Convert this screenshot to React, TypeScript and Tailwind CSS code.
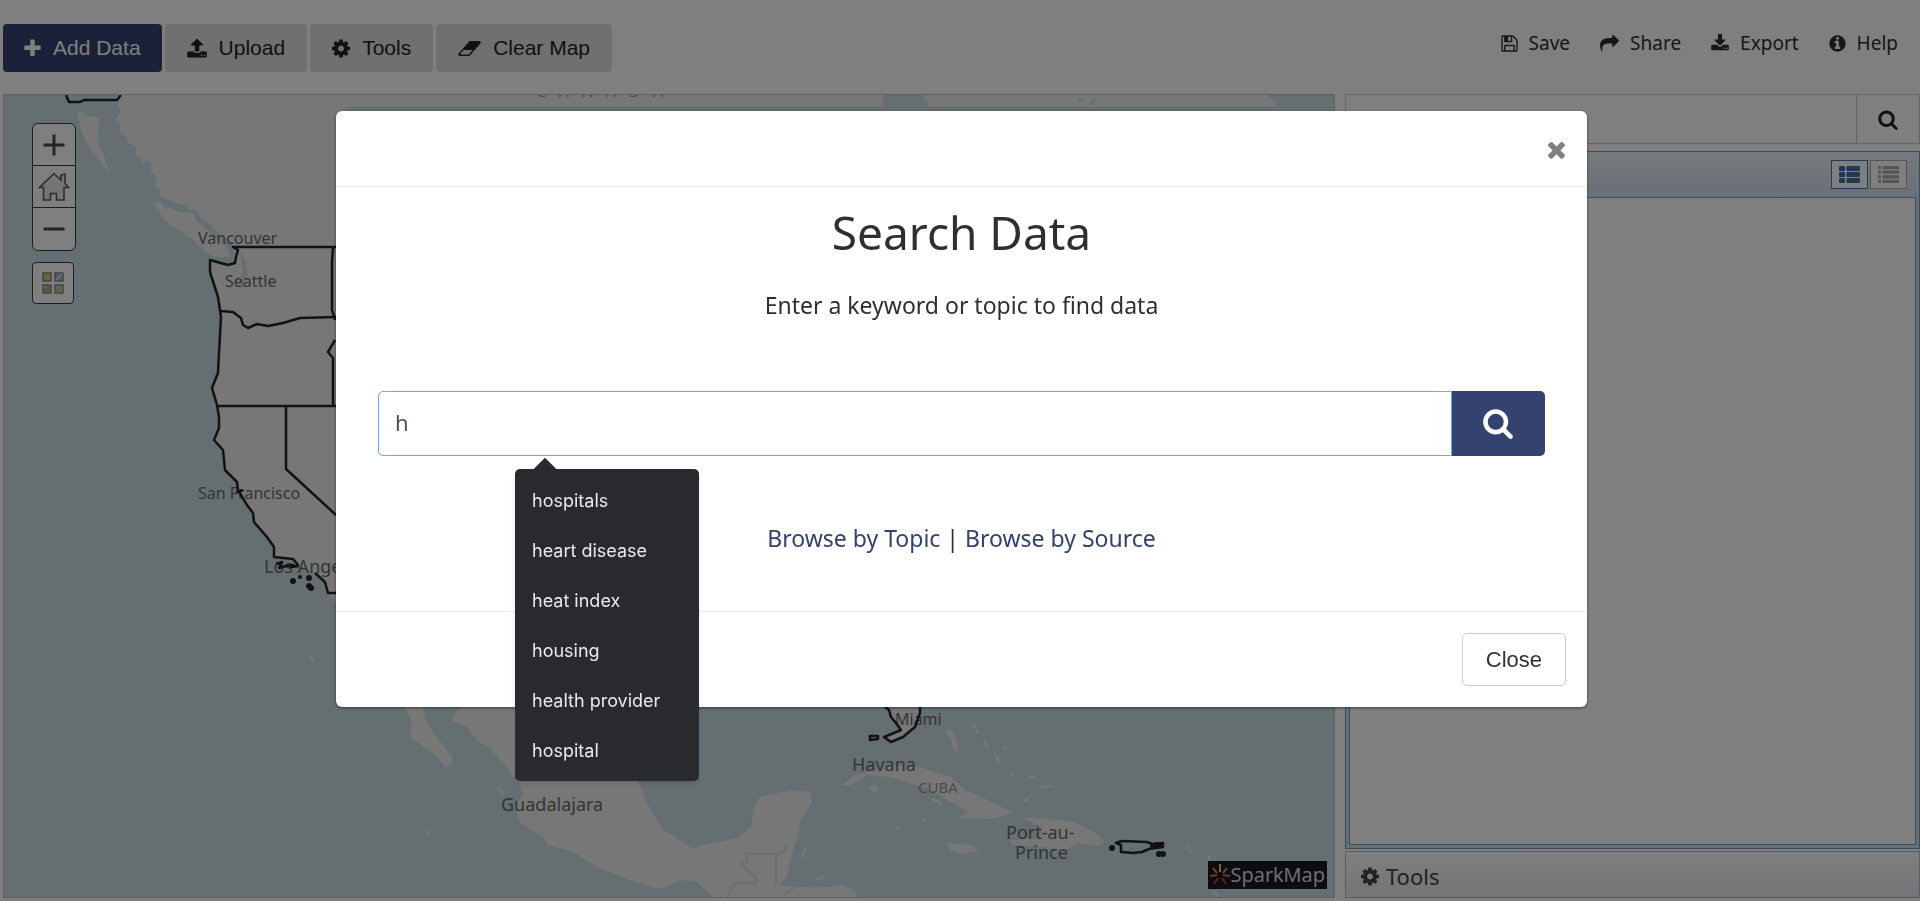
import { useState } from "react";
import type { ReactNode } from "react";

interface IconProps {
  className?: string;
}

interface GlyphProps extends IconProps {
  viewBox: string;
  children: ReactNode;
}

function Glyph({ viewBox, className, children }: GlyphProps) {
  return (
    <svg viewBox={viewBox} className={className} fill="currentColor" aria-hidden="true">
      {children}
    </svg>
  );
}

const PlusIcon = ({ className }: IconProps) => (
  <Glyph viewBox="192 0 1408 1792" className={className}>
    <path d="M1600 736v192q0 40-28 68t-68 28h-416v416q0 40-28 68t-68 28h-192q-40 0-68-28t-28-68v-416h-416q-40 0-68-28t-28-68v-192q0-40 28-68t68-28h416v-416q0-40 28-68t68-28h192q40 0 68 28t28 68v416h416q40 0 68 28t28 68z" />
  </Glyph>
);

const UploadIcon = ({ className }: IconProps) => (
  <Glyph viewBox="64 0 1664 1792" className={className}>
    <path d="M1344 1472q0-26-19-45t-45-19-45 19-19 45 19 45 45 19 45-19 19-45zm256 0q0-26-19-45t-45-19-45 19-19 45 19 45 45 19 45-19 19-45zm128-224v320q0 40-28 68t-68 28h-1472q-40 0-68-28t-28-68v-320q0-40 28-68t68-28h427q21 56 70.5 92t110.5 36h256q61 0 110.5-36t70.5-92h427q40 0 68 28t28 68zm-325-648q-17 40-59 40h-256v448q0 26-19 45t-45 19h-256q-26 0-45-19t-19-45v-448h-256q-42 0-59-40-17-39 14-69l448-448q18-19 45-19t45 19l448 448q31 30 14 69z" />
  </Glyph>
);

const CogIcon = ({ className }: IconProps) => (
  <Glyph viewBox="128 0 1536 1792" className={className}>
    <path d="M1152 896q0-106-75-181t-181-75-181 75-75 181 75 181 181 75 181-75 75-181zm512-109v222q0 12-8 23t-20 13l-185 28q-19 54-39 91 35 50 107 138 10 12 10 25t-9 23q-27 37-99 108t-94 71q-12 0-26-9l-138-108q-44 23-91 38-16 136-29 186-7 28-36 28h-222q-14 0-24.5-8.5t-11.5-21.5l-28-184q-49-16-90-37l-141 107q-10 9-25 9-14 0-25-11-126-114-165-168-7-10-7-23 0-12 8-23 15-21 51-66.5t54-70.5q-27-50-41-99l-183-27q-13-2-21-12.5t-8-23.5v-222q0-12 8-23t19-13l186-28q14-46 39-92-40-57-107-138-10-12-10-24 0-10 9-23 26-36 98.5-107.5t94.5-71.5q13 0 26 10l138 107q44-23 91-38 16-136 29-186 7-28 36-28h222q14 0 24.5 8.5t11.5 21.5l28 184q49 16 90 37l142-107q9-9 24-9 13 0 25 10 129 119 165 170 7 8 7 22 0 12-8 23-15 21-51 66.5t-54 70.5q26 50 41 98l183 28q13 2 21 12.5t8 23.5z" />
  </Glyph>
);

const EraserIcon = ({ className }: IconProps) => (
  <Glyph viewBox="64 0 1920 1792" className={className}>
    <path d="M960 1408l336-384h-768l-336 384h768zm1013-1077q15 34 9.5 71.5t-30.5 65.5l-896 1024q-38 44-96 44h-768q-38 0-69.5-20.5t-47.5-54.5q-15-34-9.5-71.5t30.5-65.5l896-1024q38-44 96-44h768q38 0 69.5 20.5t47.5 54.5z" />
  </Glyph>
);

const SaveIcon = ({ className }: IconProps) => (
  <Glyph viewBox="128 0 1536 1792" className={className}>
    <path d="M512 1536h768v-384h-768v384zm896 0h128v-896q0-14-10-38.5t-20-34.5l-281-281q-10-10-34-20t-39-10v416q0 40-28 68t-68 28h-576q-40 0-68-28t-28-68v-416h-128v1280h128v-416q0-40 28-68t68-28h832q40 0 68 28t28 68v416zm-384-928v-320q0-13-9.5-22.5t-22.5-9.5h-192q-13 0-22.5 9.5t-9.5 22.5v320q0 13 9.5 22.5t22.5 9.5h192q13 0 22.5-9.5t9.5-22.5zm640 32v928q0 40-28 68t-68 28h-1344q-40 0-68-28t-28-68v-1344q0-40 28-68t68-28h928q40 0 88 20t76 48l280 280q28 28 48 76t20 88z" />
  </Glyph>
);

const ShareIcon = ({ className }: IconProps) => (
  <Glyph viewBox="0 0 1792 1792" className={className}>
    <path d="M1792 640q0 26-19 45l-512 512q-19 19-45 19t-45-19-19-45v-256h-224q-98 0-175.5 6t-154 21.5-133 42.5-105.5 69.5-80 101-48.5 138.5-17.5 181q0 55 5 123 0 6 2.5 23.5t2.5 26.5q0 15-8.5 25t-23.5 10q-16 0-28-17-7-9-13-22t-13.5-30-10.5-24q-127-285-127-451 0-199 53-333 162-403 875-403h224v-256q0-26 19-45t45-19 45 19l512 512q19 19 19 45z" />
  </Glyph>
);

const ExportIcon = ({ className }: IconProps) => (
  <Glyph viewBox="64 0 1664 1792" className={className}>
    <path d="M1344 1344q0-26-19-45t-45-19-45 19-19 45 19 45 45 19 45-19 19-45zm256 0q0-26-19-45t-45-19-45 19-19 45 19 45 45 19 45-19 19-45zm128-224v320q0 40-28 68t-68 28h-1472q-40 0-68-28t-28-68v-320q0-40 28-68t68-28h465l135 136q58 56 136 56t136-56l136-136h464q40 0 68 28t28 68zm-325-569q17 41-14 70l-448 448q-18 19-45 19t-45-19l-448-448q-31-29-14-70 17-39 59-39h256v-448q0-26 19-45t45-19h256q26 0 45 19t19 45v448h256q42 0 59 39z" />
  </Glyph>
);

const InfoIcon = ({ className }: IconProps) => (
  <Glyph viewBox="128 0 1536 1792" className={className}>
    <path d="M1152 1376v-160q0-14-9-23t-23-9h-96v-512q0-14-9-23t-23-9h-320q-14 0-23 9t-9 23v160q0 14 9 23t23 9h96v320h-96q-14 0-23 9t-9 23v160q0 14 9 23t23 9h448q14 0 23-9t9-23zm-128-896v-160q0-14-9-23t-23-9h-192q-14 0-23 9t-9 23v160q0 14 9 23t23 9h192q14 0 23-9t9-23zm640 416q0 209-103 385.5t-279.5 279.5-385.5 103-385.5-103-279.5-279.5-103-385.5 103-385.5 279.5-279.5 385.5-103 385.5 103 279.5 279.5 103 385.5z" />
  </Glyph>
);

const SearchIcon = ({ className }: IconProps) => (
  <Glyph viewBox="64 0 1664 1792" className={className}>
    <path d="M1216 832q0-185-131.5-316.5t-316.5-131.5-316.5 131.5-131.5 316.5 131.5 316.5 316.5 131.5 316.5-131.5 131.5-316.5zm512 832q0 52-38 90t-90 38q-54 0-90-38l-343-342q-179 124-399 124-143 0-273.5-55.5t-225-150-150-225-55.5-273.5 55.5-273.5 150-225 225-150 273.5-55.5 273.5 55.5 225 150 150 225 55.5 273.5q0 220-124 399l343 343q37 37 37 90z" />
  </Glyph>
);

const TimesIcon = ({ className }: IconProps) => (
  <Glyph viewBox="302 302 1188 1188" className={className}>
    <path d="M1490 1322q0 40-28 68l-136 136q-28 28-68 28t-68-28l-294-294-294 294q-28 28-68 28t-68-28l-136-136q-28-28-28-68t28-68l294-294-294-294q-28-28-28-68t28-68l136-136q28-28 68-28t68 28l294 294 294-294q28-28 68-28t68 28l136 136q28 28 28 68t-28 68l-294 294 294 294q28 28 28 68z" />
  </Glyph>
);

const ThListIcon = ({ className }: IconProps) => (
  <Glyph viewBox="0 0 21 17" className={className}>
    {[0, 6, 12].map((y) => (
      <g key={y}>
        <rect x="0" y={y} width="6" height="5" rx="1.2" />
        <rect x="7.5" y={y} width="13.5" height="5" rx="1.2" />
      </g>
    ))}
  </Glyph>
);

const ListIcon = ({ className }: IconProps) => (
  <Glyph viewBox="0 0 21 17" className={className}>
    {[0, 4.6, 9.2, 13.8].map((y) => (
      <g key={y}>
        <rect x="0" y={y} width="3" height="3.2" rx="0.6" />
        <rect x="4.5" y={y} width="16.5" height="3.2" rx="0.6" />
      </g>
    ))}
  </Glyph>
);

const TOOLBAR = [
  { label: "Add Data", icon: <PlusIcon className="h-[21px] w-[17px]" />, primary: true },
  { label: "Upload", icon: <UploadIcon className="h-[21px] w-[20px]" />, primary: false },
  { label: "Tools", icon: <CogIcon className="h-[21px] w-[18px]" />, primary: false },
  { label: "Clear Map", icon: <EraserIcon className="h-[21px] w-[23px]" />, primary: false },
];

const LINKS = [
  { label: "Save", icon: <SaveIcon className="h-[19px] w-[17px]" /> },
  { label: "Share", icon: <ShareIcon className="h-[19px] w-[19px]" /> },
  { label: "Export", icon: <ExportIcon className="h-[19px] w-[18px]" /> },
  { label: "Help", icon: <InfoIcon className="h-[19px] w-[17px]" /> },
];

const SUGGESTIONS = ["hospitals", "heart disease", "heat index", "housing", "health provider", "hospital"];

const LAND = [
  // Canada and the west coast
  "M122 90L118 104L121 112L115 120L120 124V133L127 137L128 143L137 148L135 155L142 158L141 164L148 160L152 165L151 172L157 178L154 185L161 190L160 196L168 200L177 203L187 205L190 210L197 210L200 217L207 223L211 229L220 237L226 238L233 243L235 263L222 264L210 260L210 272L218 297L221 317L219 353L218 373L212 388L217 405L219 417L219 428L214 440L223 450L225 470L237 482L238 490L247 505L253 513L254 522L267 537L274 547L274 557L293 559L298 565L313 572L325 582L328 593L338 606L345 606V107H882L885 90Z",
  "M918 90L930 107H1273L1278 104L1270 98L1262 90Z",
  // Vancouver Island and Haida Gwaii
  "M152 205L160 201L165 207L170 208L180 212L193 213L198 222L207 230L215 238L227 247L230 257L213 257L205 251L200 247L193 239L187 237L180 230L172 227L163 218L158 209Z",
  "M77 113L82 112L88 117L94 116L100 120L98 130L97 137L99 146L104 155L106 163L110 172L103 166L97 157L90 148L83 137L80 124Z",
  // Baja and Mexico
  "M402 700H422L425 720L435 735L447 750L454 760L446 768L433 753L420 744L410 737L412 723Z",
  "M466 700L453 716V722L467 727L478 742L490 748L503 763L513 777L520 783L523 795L515 807L520 823L543 837L548 845L573 852L597 867L637 883L660 889L680 880L697 882L713 897V905H863L854 890L841 885L830 887L797 887L780 885L787 877L793 850L798 837L800 820L812 803L810 792L790 790L760 797L754 807L751 827L737 838L713 843L692 848L677 838L663 830L647 803L640 785L636 778L620 720V700Z",
  // Florida
  "M880 700L889 710L891 717L896 723L901 730L894 733L884 737L891 742L903 737L915 727L920 713L921 700Z",
  // Cuba, Jamaica, Hispaniola
  "M842 785L855 775L872 771L889 765L920 767L951 777L965 790L992 802L1013 813L992 819L958 818L968 812L944 798L927 788L889 777L868 775L851 785Z",
  "M869 788L874 784L879 789L875 793Z",
  "M946 843L971 845L979 851L963 854L951 850Z",
  "M1023 818L1040 818L1075 822L1095 833L1105 842L1099 846L1078 843L1065 850L1047 847L1013 845L1009 840L1040 838L1042 827Z",
  // Bahamas
  "M949 728L954 733L956 740L959 752L954 750L951 740L946 732Z",
  "M1020 801L1030 797L1028 801Z",
];

const BORDERS = [
  "M66 95L69 102H80L84 100H117L121 95",
  "M336 247H233L238 250L236 257L235 263L228 265L210 260V272L218 297L221 317L219 353L218 373L212 388L217 405L219 417V428L214 440L223 450L225 470L237 482L238 490L247 505L253 513L254 522L267 537L274 547L274 557L293 559L298 565L291 567L299 566",
  "M333 247L332 263V310L335 320M335 340L328 352L333 358V405",
  "M221 311L233 312L241 318L243 325L248 328L257 324L268 326L283 323L300 318L336 317",
  "M217 406H336M286 406V469L336 515",
  "M315 573L325 582L328 593H338",
  "M236 492L243 490M276 564L282 562L279 568L286 566L294 565",
  "M881 703L889 710L891 717L896 723L901 730L894 733L884 737L891 742L903 737L915 727L920 713V703",
  "M870 736H878V739L870 740Z",
  "M1116 843L1122 841L1147 842L1152 844L1163 843V847L1149 849L1142 852L1133 853L1121 852V845Z",
];

const BLOBS = [
  [293, 581, 3], [300, 577, 2], [309, 578, 3], [309, 586, 3], [311, 588, 3], [1112, 848, 3],
  [1153, 846, 3], [1157, 845, 3], [1160, 845, 3], [1159, 854, 3], [1163, 854, 3],
];

const ISLETS =
  "M972 722L979 734M984 740L988 749M995 754L1000 763M1003 747L1007 750M1009 777L1014 773M1030 777L1034 777M1041 787L1052 786M896 828L901 828M922 820L926 820M932 799L942 804M1188 845L1191 854M1209 855V862M1212 890L1218 897M497 787L504 794M311 656L313 661M427 836L430 830M806 848L802 858M815 880L824 877";

const LABELS = [
  { text: "Vancouver", x: 198, y: 244, size: "text-[16px]" },
  { text: "Seattle", x: 225, y: 287, size: "text-[16px]" },
  { text: "San Francisco", x: 198, y: 499, size: "text-[16px]" },
  { text: "Los Angeles", x: 264, y: 573, size: "text-[18px]" },
  { text: "Guadalajara", x: 501, y: 811, size: "text-[18px]" },
  { text: "Miami", x: 895, y: 725, size: "text-[16px]" },
  { text: "Havana", x: 852, y: 771, size: "text-[18px]" },
  { text: "Port-au-", x: 1006, y: 839, size: "text-[18px]" },
  { text: "Prince", x: 1015, y: 859, size: "text-[18px]" },
];

function MapCanvas() {
  return (
    <svg className="block h-full w-full bg-[#cadce2]" role="img" aria-label="Map of North America">
      <g transform="translate(-4 -95)">
        <g fill="#f0efef">
          {LAND.map((d) => (
            <path key={d} d={d} />
          ))}
        </g>
        {/* Puget Sound and inlets */}
        <path d="M203 219L212 226L222 236L231 243L226 242L214 233Z" fill="#cadce2" />
        <path d="M240 252L246 262L248 275L243 289L240 280L243 270Z" fill="#cadce2" />
        <path d="M160 196L170 203L182 207L172 207Z" fill="#cadce2" />
        <path d="M1078 98L1083 102M1096 99L1091 104" stroke="#cadce2" strokeWidth="2" />
        <path d={ISLETS} stroke="#f0efef" strokeWidth="2" fill="none" />
        <path
          d="M727 897L735 883H756V878L740 863L747 861V854H776V885M776 854L783 852L788 844M783 896L795 887"
          stroke="#dcdcdc"
          strokeWidth="2"
          fill="none"
        />
        <g className="font-['Noto_Sans',sans-serif]" fill="#686868">
          {LABELS.map((label) => (
            <text key={label.text} x={label.x} y={label.y} className={label.size}>
              {label.text}
            </text>
          ))}
          <text x="918" y="793" className="text-[15px]" fill="#949494">
            CUBA
          </text>
          <text x="536" y="97" className="text-[16px]" fill="#a0a0a0">
            {["C", "A", "N", "A", "D", "A"].join("\u00a0\u00a0\u00a0")}
          </text>
        </g>
        <g fill="none" stroke="#242424" strokeWidth="2.5" strokeLinejoin="round">
          {BORDERS.map((d) => (
            <path key={d} d={d} />
          ))}
        </g>
        <g fill="#242424">
          {BLOBS.map(([cx, cy, r]) => (
            <circle key={`${cx}-${cy}`} cx={cx} cy={cy} r={r} />
          ))}
        </g>
      </g>
    </svg>
  );
}

function HomeIcon() {
  return (
    <svg viewBox="0 0 32 30" className="h-[30px] w-[32px]" fill="#e8e8e8" stroke="#5a5a5a" strokeWidth="1.6" aria-hidden="true">
      <path d="M16 1.5L1.5 15.5H5.5V28H12.5V21.5H18.5V28H26V15.5H30.5L27 11.5V2L23 3V8Z" />
    </svg>
  );
}

function MapControls() {
  return (
    <div className="absolute top-[28px] left-[28px] flex flex-col items-start gap-[11px]">
      <div className="flex w-[44px] flex-col divide-y divide-[#3c3c3c] rounded-md border border-[#3c3c3c] bg-white">
        <button aria-label="Zoom in" className="flex h-[42px] items-center justify-center">
          <svg viewBox="0 0 22 22" className="size-[22px]" stroke="#4a4a4a" strokeWidth="3">
            <path d="M11 0.500V21.500M0.500 11H21.500" />
          </svg>
        </button>
        <button aria-label="Default extent" className="flex h-[42px] items-center justify-center">
          <HomeIcon />
        </button>
        <button aria-label="Zoom out" className="flex h-[42px] items-center justify-center">
          <svg viewBox="0 0 22 22" className="size-[22px]" stroke="#4a4a4a" strokeWidth="3">
            <path d="M0.500 11H21.500" />
          </svg>
        </button>
      </div>
      <button
        aria-label="Choose basemap"
        className="flex size-[42px] items-center justify-center rounded-[4px] border border-[#3c3c3c] bg-white"
      >
        <svg viewBox="0 0 22 22" className="size-[22px]" stroke="#8a8a8a" strokeWidth="1.5">
          <rect x="1" y="1" width="8" height="8" fill="#d9c878" />
          <rect x="13" y="1" width="8" height="8" fill="#8fb8cc" />
          <rect x="1" y="13" width="8" height="8" fill="#c9a878" />
          <rect x="13" y="13" width="8" height="8" fill="#d9d090" />
          <path d="M14 8L20 2" stroke="#e8f0f4" />
          <path d="M14 20L20 14" stroke="#9cc09c" />
          <path d="M2 16L4 14" stroke="#c8dcf0" />
        </svg>
      </button>
    </div>
  );
}

function SparkMapLogo() {
  return (
    <div className="absolute right-[7px] bottom-[8px] flex h-[28px] items-center gap-px bg-[#1c1722] px-[2px] font-['Open_Sans',sans-serif] text-[20px] leading-[28px] text-[#e4e4e4]">
      <svg viewBox="0 0 20 22" className="h-[22px] w-[20px]" strokeWidth="2" aria-hidden="true">
        <path d="M10 0V8" stroke="#e8c860" />
        <path d="M3 4L7 9M17 4L13 9" stroke="#d8a850" />
        <path d="M0 12L7 11M20 12L13 11" stroke="#d87840" />
        <path d="M4 20L8 14M16 20L12 14" stroke="#d04030" />
      </svg>
      <span>SparkMap</span>
    </div>
  );
}

function TopBar() {
  return (
    <header className="flex h-[94px] shrink-0 items-start justify-between pr-[22px] pl-[3px]">
      <div className="flex gap-[3px] pt-6 font-['Liberation_Sans',sans-serif] text-[21px]">
        {TOOLBAR.map((item) => (
          <button
            key={item.label}
            className={`flex h-[48px] items-center gap-3 rounded-[4px] ${
              item.primary ? "bg-[#344272] px-[21px] text-white" : "bg-[#e0e0e0] px-[22px] text-[#222]"
            }`}
          >
            {item.icon}
            {item.label}
          </button>
        ))}
      </div>
      <nav className="flex gap-[30px] pt-7 font-['Noto_Sans',sans-serif] text-[19px] leading-[30px] text-[#2e2e33]">
        {LINKS.map((item) => (
          <a key={item.label} href="#" className="flex items-center gap-[11px]">
            {item.icon}
            {item.label}
          </a>
        ))}
      </nav>
    </header>
  );
}

function LayerPanel() {
  return (
    <aside className="flex w-[30%] flex-col">
      <form className="flex h-[50px] shrink-0 border border-[#ccc]" onSubmit={(e) => e.preventDefault()}>
        <input aria-label="Find a location" className="min-w-0 flex-1 bg-white px-3 text-[20px] outline-none" />
        <button aria-label="Find" className="flex w-[63px] items-center justify-center border-l border-[#ccc] text-[#222]">
          <SearchIcon className="h-[21px] w-[20px]" />
        </button>
      </form>

      <section className="mt-[7px] flex flex-1 flex-col border border-[#769dc0] bg-[#cddcec]">
        <div className="flex h-[45px] shrink-0 items-center justify-end gap-[2px] bg-linear-to-b from-[#eef4f8] to-[#d3e0f2] pr-[12px]">
          <button
            aria-label="Legend view"
            className="flex h-[29px] w-[37px] items-center justify-center border border-[#4a7aa8] bg-white text-[#44709c]"
          >
            <ThListIcon className="h-[17px] w-[21px]" />
          </button>
          <button
            aria-label="List view"
            className="flex h-[29px] w-[37px] items-center justify-center border border-[#aaa] bg-white text-[#aaa]"
          >
            <ListIcon className="h-[17px] w-[21px]" />
          </button>
        </div>
        <div className="mx-[3px] mb-[3px] flex-1 border border-[#769dc0] bg-white" />
      </section>

      <button className="mt-[2px] flex h-[47px] shrink-0 items-center gap-[7px] border border-[#b5bcc7] bg-linear-to-b from-white to-[#e9e9ee] px-[15px] pt-1 font-['Noto_Sans',sans-serif] text-[22px] text-[#444]">
        <CogIcon className="h-[21px] w-[18px]" />
        Tools
      </button>
    </aside>
  );
}

interface SearchDialogProps {
  onClose: () => void;
}

function SearchDialog({ onClose }: SearchDialogProps) {
  const [query, setQuery] = useState("h");
  const matches = SUGGESTIONS.filter((s) => query !== "" && s.startsWith(query.toLowerCase()));

  return (
    <div className="fixed inset-0 flex items-start justify-center bg-black/50 pt-[111px] pl-[3px]">
      <div
        role="dialog"
        aria-modal="true"
        aria-labelledby="search-title"
        className="w-[1251px] max-w-full rounded-[6px] bg-white font-['Noto_Sans',sans-serif] text-[23px] leading-[32px] text-[#2e2e33] shadow-[0_1px_3px_rgba(0,0,0,0.500)]"
      >
        <div className="flex h-[76px] items-center justify-end border-b border-[#e9ecef] pt-px pr-[22px]">
          <button aria-label="Dismiss" onClick={onClose} className="text-[#808080]">
            <TimesIcon className="size-[17px] overflow-visible" />
          </button>
        </div>

        {/* Search form */}
        <div className="px-[42px] pt-[17px] pb-[57px] text-center">
          <h1 id="search-title" className="text-[46px] leading-[56px]">
            Search Data
          </h1>
          <p className="mt-[29px]">Enter a keyword or topic to find data</p>

          <form className="relative mt-[70px] flex h-[65px]" onSubmit={(e) => e.preventDefault()}>
            <input
              aria-label="Keyword or topic"
              value={query}
              onChange={(e) => setQuery(e.target.value)}
              className="min-w-0 flex-1 rounded-l-[5px] border border-[#69a9f5] px-[16px] pb-1 text-[22px] text-[#495057] outline-none"
            />
            <button
              aria-label="Search"
              className="flex w-[93px] items-center justify-center rounded-r-[5px] bg-[#344270] pr-[2px] pb-[2px] text-white"
            >
              <SearchIcon className="h-[32px] w-[30px]" />
            </button>

            {matches.length > 0 && (
              <div className="absolute top-[78px] left-[137px] w-[184px] rounded-[5px] bg-[#292a2d] pt-[7px] pb-[5px] text-left font-['Inter',sans-serif] text-[18px] leading-[50px] text-[#e8eaed] shadow-md">
                <span className="absolute -top-2 left-[22px] size-4 rotate-45 bg-[#292a2d]" />
                <ul className="relative">
                  {matches.map((match) => (
                    <li key={match} className="px-[17px]">
                      {match}
                    </li>
                  ))}
                </ul>
              </div>
            )}
          </form>

          <p className="mt-[66px]">
            <a href="#" className="text-[#344270]">Browse by Topic</a>
            {" | "}
            <a href="#" className="text-[#344270]">Browse by Source</a>
          </p>
        </div>

        <div className="flex justify-end border-t border-[#e9ecef] p-[21px]">
          <button
            onClick={onClose}
            className="h-[53px] rounded-[5px] border border-[#ccc] px-[23px] font-['Liberation_Sans',sans-serif] text-[22px] text-[#333]"
          >
            Close
          </button>
        </div>
      </div>
    </div>
  );
}

export default function App() {
  const [dialogOpen, setDialogOpen] = useState(true);

  return (
    <div className="flex h-screen flex-col bg-white">
      <TopBar />
      <main className="flex min-h-0 flex-1 gap-[10px] pb-[3px] pl-[3px]">
        <div className="relative min-w-0 flex-1 border border-[#c0c0c0]">
          <MapCanvas />
          <MapControls />
          <SparkMapLogo />
        </div>
        <LayerPanel />
      </main>
      {dialogOpen && <SearchDialog onClose={() => setDialogOpen(false)} />}
    </div>
  );
}
